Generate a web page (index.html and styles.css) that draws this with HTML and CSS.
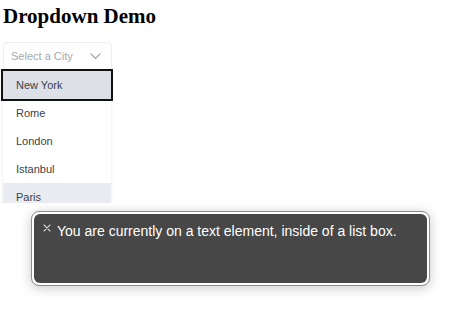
FILE: index.html
```html
<!DOCTYPE html>
<html lang="en">
<head>
<meta charset="utf-8">
<title>Dropdown Demo</title>
<link rel="stylesheet" href="styles.css">
</head>
<body>
<main class="page">
  <h1 class="title">Dropdown Demo</h1>
  <div class="dropdown">
    <button class="select" type="button">
      <span class="placeholder">Select a City</span>
      <svg class="chevron" width="11" height="7" viewBox="0 0 11 7"><path d="M1 1 L5.5 5.5 L10 1" fill="none" stroke="#a3a8b0" stroke-width="1.2" stroke-linecap="round" stroke-linejoin="round"/></svg>
    </button>
    <ul class="list" role="listbox">
      <li class="item focused">New York</li>
      <li class="item">Rome</li>
      <li class="item">London</li>
      <li class="item">Istanbul</li>
      <li class="item hovered">Paris</li>
    </ul>
  </div>
</main>
<div class="caption">
  <div class="caption-inner">
    <svg class="close" width="8" height="8" viewBox="0 0 8 8"><path d="M1 1 L7 7 M7 1 L1 7" stroke="#d0d0d0" stroke-width="1.1" stroke-linecap="round"/></svg>
    <span class="caption-text">You are currently on a text element, inside of a list box.</span>
  </div>
</div>
</body>
</html>
```
FILE: styles.css
```css
html, body {
  margin: 0;
  padding: 0;
  background: #ffffff;
}
.page {
  padding: 0 0 0 3px;
}
.title {
  font-family: "Liberation Serif", "Times New Roman", serif;
  font-weight: bold;
  font-size: 21px;
  line-height: 23px;
  margin: 5px 0 14px 0;
  color: #000;
}
.dropdown {
  width: 108px;
  font-family: "Liberation Sans", Arial, sans-serif;
  font-size: 11px;
}
.select {
  box-sizing: border-box;
  width: 109px;
  height: 28px;
  border: 1px solid #eceef1;
  border-radius: 4px;
  background: #fff;
  display: flex;
  align-items: center;
  justify-content: space-between;
  padding: 0 10px 0 7px;
  margin: 0;
  font: inherit;
}
.placeholder {
  color: #a3a8b0;
}
.chevron {
  display: block;
  margin-top: 1px;
}
.list {
  list-style: none;
  margin: 1px 0 0 0;
  padding: 0;
  height: 132px;
  overflow: visible;
  clip-path: inset(-3px -4px -2px -4px);
  background: #fff;
  box-shadow: 0 2px 3px rgba(0, 0, 0, 0.10);
}
.item {
  height: 28px;
  line-height: 28px;
  padding-left: 13px;
  color: #3a3f47;
}
.item.focused {
  background: #dde1e7;
  outline: 2px solid #111;
  outline-offset: 0;
}
.item.hovered {
  background: #e9edf1;
}
.caption {
  position: absolute;
  left: 31px;
  top: 211px;
  width: 399px;
  height: 75px;
  box-sizing: border-box;
  border: 1px solid #8a8a8a;
  border-radius: 8px;
  padding: 2px;
  background: #fff;
  box-shadow: 0 2px 12px rgba(0, 0, 0, 0.22);
}
.caption-inner {
  height: 100%;
  box-sizing: border-box;
  background: #474747;
  border-radius: 6px;
  display: flex;
  align-items: flex-start;
  padding: 9px 0 0 9px;
  gap: 6px;
}
.close {
  display: block;
  margin-top: 1px;
  flex: none;
}
.caption-text {
  font-family: "Liberation Sans", Arial, sans-serif;
  font-size: 14px;
  color: #ffffff;
  line-height: 16px;
}
```
